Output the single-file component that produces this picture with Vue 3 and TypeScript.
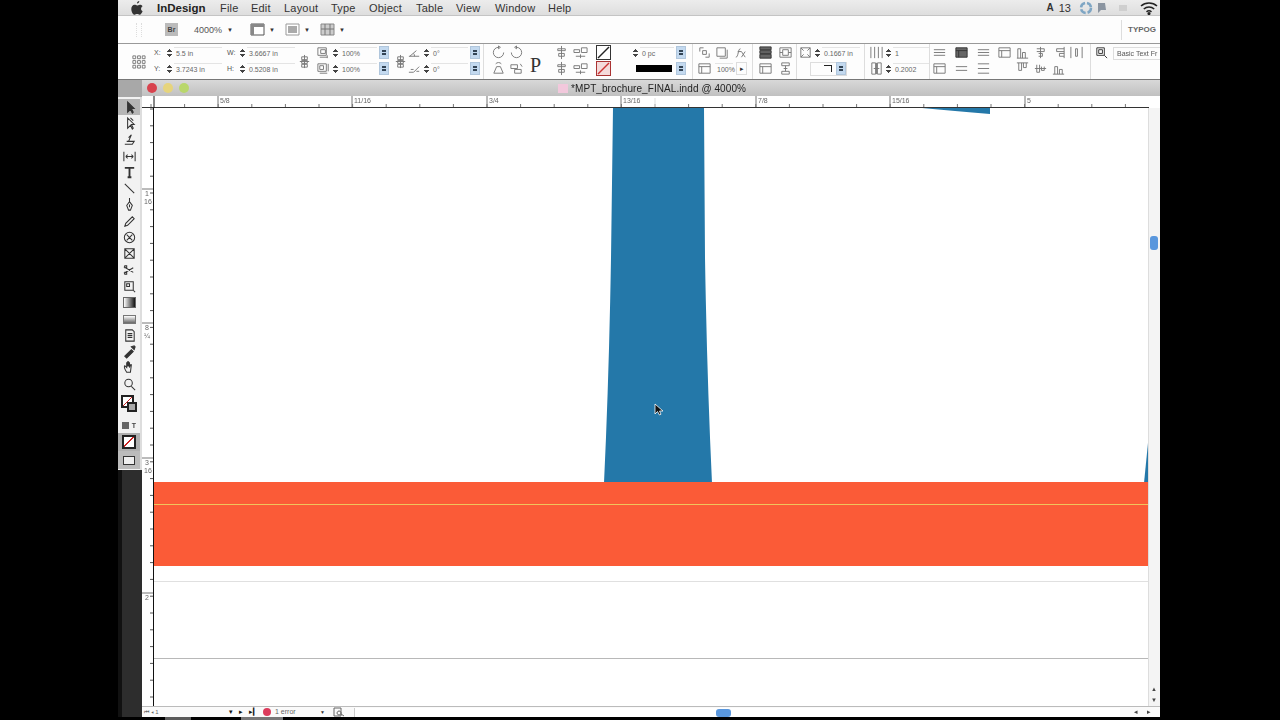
<script setup lang="ts">
type Item = {
  kind: 'icon' | 'label' | 'step' | 'val' | 'spin' | 'swatch' | 'box' | 'bigp' | 'drop' | 'corner'
  d?: string
  text?: string
  w?: number
  dark?: boolean
}
type Col = { w: number; pad?: number; gap?: number; sep?: boolean; rows: Item[][] }

const menus = [
  { name: 'File', w: 31 },
  { name: 'Edit', w: 33 },
  { name: 'Layout', w: 47 },
  { name: 'Type', w: 38 },
  { name: 'Object', w: 47 },
  { name: 'Table', w: 40 },
  { name: 'View', w: 39 },
  { name: 'Window', w: 53 },
  { name: 'Help', w: 30 },
]

const P = {
  refpt: 'M2 2h3v3H2zM7 2h3v3H7zM12 2h3v3h-3zM2 7h3v3H2zM7 7h3v3H7zM12 7h3v3h-3zM2 12h3v3H2zM7 12h3v3H7zM12 12h3v3h-3z',
  frame: 'M2 3h12v10H2zM2 6h12M5 6v7',
  page: 'M3 3h10v10H3zM5 5h6v6H5z',
  chain: 'M5 3h6v3H5zM5 7h6v3H5zM5 11h6v3H5zM8 1v14M3 8h10',
  scaleX: 'M2 3h9v8H2zM4 13h8M12 11v3M5 5h5v4H5z',
  scaleY: 'M2 3h9v8H2zM4 13h8M4 5h4v4H4zM13 3v8',
  angle: 'M2 12h11M3 12l7-6M8 12a4 4 0 0 0-1-3',
  shear: 'M2 12h5l6-6M10 11h3M4 9h3',
  rotL: 'M8 2.500a5.500 5.500 0 1 0 5.500 5.500M8 1v3l2-1.500z',
  rotR: 'M8 2.500a5.500 5.500 0 1 1-5.500 5.500M8 1v3l-2-1.500z',
  flipA: 'M3 13l3-7h4l3 7zM5 3a4 4 0 0 1 6 0',
  flipB: 'M2 4h7v4H2zM6 9h7v4H6zM12 3l2 3',
  alignA: 'M8 1v14M4 4h8v2H4zM5 9h6v3H5z',
  alignB: 'M1 5h6v3H1zM9 3h6v5H9zM8 10v4M3 12h10',
  gap: 'M4 2h8v3H4zM4 11h8v3H4zM8 5v6M6 8h4',
  shadow: 'M2 3h9v9H2zM13 5v9H5',
  fit: 'M3 3h4M3 3v4M13 13H9M13 13V9M6 6h4v4H6z',
  fx: 'M3 13c3 0 2-9 5-9M5 7h4M9 7l4 6M13 7l-4 6',
  wrapOn: 'M2 2h12v3H2zM2 6h12v3H2zM2 10h12v4H2z',
  wrapB: 'M2 3h12v10H2zM5 5h6v6H5zM2 8h3M11 8h3',
  inset: 'M3 3h10v10H3zM3 3l3 3M13 3l-3 3M3 13l3-3M13 13l-3-3',
  cols: 'M2 2v12M6 2v12M10 2v12M14 2v12',
  gut: 'M3 2h4v12H3zM9 2h4v12H9zM8 2v12M5 8h6',
  lines2: 'M2 5h12M2 8h12M2 11h12',
  double: 'M2 6h12M2 10h12',
  triple: 'M2 3h12M2 8h12M2 13h12',
  alignTop: 'M2 2h12M4 2v8h3V2M9 2v5h3V2',
  alignMid: 'M2 8h12M4 4v8h3V4M9 6v4h3V6',
  alignBot: 'M2 14h12M4 14V6h3v8M9 14V9h3v5',
  alignL: 'M2 14h12M3 14V4h3v10M8 14V8h3v6',
  alignC: 'M8 2v12M4 4h8v3H4M6 9h4v3H6',
  alignR: 'M14 2v12M14 4H6v3h8M14 9H9v3h5',
  dist: 'M2 2v12M7 4h2v8H7zM14 2v12',
  obj: 'M3 3h8v8H3zM11 11l3 3M5 5h4v4H5z',
}

const ic = (d: string): Item => ({ kind: 'icon', d })
const label = (text: string): Item => ({ kind: 'label', text })
const step: Item = { kind: 'step' }
const val = (text: string, w: number): Item => ({ kind: 'val', text, w })
const spin: Item = { kind: 'spin' }

const cols: Col[] = [
  { w: 20, rows: [[ic(P.refpt)]] },
  { w: 73, rows: [[label('X:'), step, val('5.5 in', 48)], [label('Y:'), step, val('3.7243 in', 48)]] },
  { w: 73, rows: [[label('W:'), step, val('3.6667 in', 48)], [label('H:'), step, val('0.5208 in', 48)]] },
  { w: 19, rows: [[ic(P.chain)]] },
  { w: 75, rows: [[ic(P.scaleX), step, val('100%', 37), spin], [ic(P.scaleY), step, val('100%', 37), spin]] },
  { w: 16, pad: 2, rows: [[ic(P.chain)]] },
  { w: 77, sep: true, rows: [[ic(P.angle), step, val('0°', 37), spin], [ic(P.shear), step, val('0°', 37), spin]] },
  { w: 42, pad: 7, gap: 3, rows: [[ic(P.rotL), ic(P.rotR)], [ic(P.flipA), ic(P.flipB)]] },
  { w: 22, rows: [[{ kind: 'bigp', text: 'P' }]] },
  { w: 44, pad: 6, gap: 4, rows: [[ic(P.alignA), ic(P.alignB)], [ic(P.alignA), ic(P.alignB)]] },
  { w: 36, rows: [[{ kind: 'box' }], [{ kind: 'box', dark: true }]] },
  { w: 65, pad: 5, sep: true, rows: [[step, val('0 pc', 34), spin], [{ kind: 'swatch' }, spin]] },
  { w: 60, pad: 4, gap: 3, sep: true, rows: [[ic(P.fit), ic(P.shadow), ic(P.fx)], [ic(P.frame), val('100%', 18), { kind: 'drop' }]] },
  { w: 44, pad: 5, gap: 5, sep: true, rows: [[{ kind: 'icon', d: P.wrapOn, dark: true }, ic(P.wrapB)], [ic(P.frame), ic(P.gap)]] },
  { w: 68, pad: 1, sep: true, rows: [[ic(P.inset), step, val('0.1667 in', 38)], [{ kind: 'corner' }]] },
  { w: 65, pad: 4, sep: true, rows: [[ic(P.cols), step, val('1', 36)], [ic(P.gut), step, val('0.2002', 36)]] },
  { w: 65, pad: 2, gap: 7, rows: [[ic(P.lines2), { kind: 'icon', d: P.frame, dark: true }, ic(P.lines2)], [ic(P.frame), ic(P.double), ic(P.triple)]] },
  { w: 18, pad: 2, rows: [[ic(P.frame)], []] },
  { w: 78, pad: 2, gap: 3, sep: true, rows: [[ic(P.alignL), ic(P.alignC), ic(P.alignR), ic(P.dist)], [ic(P.alignTop), ic(P.alignMid), ic(P.alignBot)]] },
]

const tools = [
  { d: 'M6 2v11l3-3 2 4 1-1-2-4h3z', on: true, fill: true },
  { d: 'M6 2v11l3-3 2 4 1-1-2-4h3zM9 2l3 3' },
  { d: 'M3 13h8l2-3H7l3-7-3 3M5 10h6' },
  { d: 'M2 3v10M14 3v10M4 8h8M4 8l2-2M4 8l2 2M12 8l-2-2M12 8l-2 2' },
  { d: 'M3 3h10M8 3v10M6 13h4', thick: true },
  { d: 'M3 3l10 10' },
  { d: 'M8 1v5M5 9l3-4 3 4-2 5H7zM8 8v3' },
  { d: 'M3 13l1-3 7-7 2 2-7 7zM3 13l3-1' },
  { d: 'M8 2.500a5.500 5.500 0 1 0 0 11 5.500 5.500 0 0 0 0-11zM5 5l6 6M11 5l-6 6' },
  { d: 'M3 3h10v10H3zM3 3l10 10M13 3L3 13' },
  { d: 'M2 4l10 6M2 11l10-6M3 3h2v2H3zM3 10h2v2H3z' },
  { d: 'M3 3h9v9H3zM5 5h3v3H5zM12 12l2 2' },
  { box: 'grad-h' },
  { box: 'grad-v' },
  { d: 'M4 2h7l2 2v10H4zM6 6h5M6 8h5M6 10h5' },
  { d: 'M3 13l7-7 2 2-7 7zM10 3l3 3 1-3-1-1z', fill: true },
  { d: 'M5 13c-2-3-3-6-2-7l2 2V3h1v4V2h1v5V3h1v5l1-3h1l-1 8z' },
  { d: 'M7 2.500a4 4 0 1 0 0 8 4 4 0 0 0 0-8zM10 10l4 4' },
]

const hMajor = [
  { x: 76, text: '5/8' },
  { x: 210, text: '11/16' },
  { x: 345, text: '3/4' },
  { x: 479, text: '13/16' },
  { x: 614, text: '7/8' },
  { x: 748, text: '15/16' },
  { x: 883, text: '5' },
]
const hTicks = Array.from({ length: 30 }, (_, i) => 9 + i * 33.6)
const vTicks = Array.from({ length: 36 }, (_, i) => 1 + i * 16.8)
const vMajor = [
  { y: 81, a: '1', b: '16' },
  { y: 215, a: '8', b: '¼' },
  { y: 350, a: '3', b: '16' },
  { y: 485, a: '2', b: '' },
]
</script>

<template>
  <div class="page">
    <div class="screen">
      <header class="menubar">
        <svg class="apple" width="12" height="14" viewBox="0 0 12 14">
          <path d="M8.300 0c.1 1.100-.9 2.500-2.300 2.500C5.900 1.300 7 .1 8.300 0zM11.600 10.200c-.7 1.600-1.700 3.500-3 3.500-.9 0-1.300-.6-2.500-.6s-1.600.6-2.500.6C2 13.700.3 10.500.3 7.900c0-2.400 1.500-4.100 3.300-4.100 1 0 1.900.7 2.500.7s1.600-.8 2.800-.8c.8 0 2 .4 2.700 1.500-2.200 1.300-1.800 4.200 0 5z" />
        </svg>
        <span class="app-name">InDesign</span>
        <span v-for="m in menus" :key="m.name" class="menu" :style="{ width: m.w + 'px' }">{{ m.name }}</span>
        <div class="tray">
          <span class="tray-a">A</span><span class="tray-num">13</span>
          <svg width="14" height="14" viewBox="0 0 14 14"><circle cx="7" cy="7" r="5" fill="none" stroke="#7fa6c4" stroke-width="2.500" stroke-dasharray="6 2" /></svg>
          <svg width="12" height="14" viewBox="0 0 12 14"><path d="M2 2h7l1 7H5l-3 3z" fill="#8b95a1" /></svg>
          <svg class="tray-grey" width="12" height="12" viewBox="0 0 12 12"><rect x="2" y="3" width="8" height="6" fill="#cfcfcf" /></svg>
          <svg class="wifi" width="18" height="14" viewBox="0 0 18 14" fill="none" stroke="#222" stroke-width="1.600">
            <path d="M1 5c4.500-4 11.500-4 16 0M3.800 8c3-2.600 7.400-2.600 10.400 0M6.500 10.800c1.500-1.200 3.500-1.200 5 0" />
            <circle cx="9" cy="12.500" r=".8" fill="#222" />
          </svg>
        </div>
      </header>

      <section class="control">
        <div class="control-top">
          <span class="grip"></span>
          <span class="br">Br</span>
          <span class="zoom-val">4000%</span><span class="caret dd-zoom">▼</span>
          <svg class="top-ic" width="15" height="13" viewBox="0 0 15 13"><path d="M1 1h13v11H1z" fill="#fff" stroke="#555" /><path d="M1 1h13v3H1zM1 4h3v8H1z" fill="#888" /></svg><span class="caret">▼</span>
          <svg class="top-ic" width="15" height="13" viewBox="0 0 15 13"><path d="M1 1h13v11H1z" fill="#fff" stroke="#999" /><path d="M3 3h9v7H3z" fill="#aaa" /></svg><span class="caret">▼</span>
          <svg class="top-ic" width="15" height="13" viewBox="0 0 15 13"><path d="M1 1h13v11H1z" fill="#ccc" stroke="#888" /><path d="M5 1v11M10 1v11M1 6h13" stroke="#777" /></svg><span class="caret">▼</span>
          <span class="typo">TYPOG</span>
        </div>
        <div class="control-bottom">
          <div
            v-for="(c, i) in cols"
            :key="i"
            class="col"
            :class="{ sep: c.sep, single: c.rows.length === 1 }"
            :style="{ width: c.w + 'px', paddingLeft: (c.pad ?? 0) + 'px' }"
          >
            <div v-for="(r, j) in c.rows" :key="j" class="cell-row" :style="{ gap: (c.gap ?? 2) + 'px' }">
              <template v-for="(it, k) in r" :key="k">
                <svg v-if="it.kind === 'icon'" class="c-icon" :class="{ dark: it.dark }" width="15" height="15" viewBox="0 0 16 16"><path :d="it.d" /></svg>
                <span v-else-if="it.kind === 'label'" class="c-label">{{ it.text }}</span>
                <span v-else-if="it.kind === 'step'" class="c-step"></span>
                <span v-else-if="it.kind === 'val'" class="c-val" :style="{ width: it.w + 'px' }">{{ it.text }}</span>
                <span v-else-if="it.kind === 'spin'" class="c-spin"></span>
                <span v-else-if="it.kind === 'swatch'" class="c-swatch"></span>
                <span v-else-if="it.kind === 'drop'" class="c-drop">▸</span>
                <span v-else-if="it.kind === 'bigp'" class="c-p">{{ it.text }}</span>
                <span v-else-if="it.kind === 'corner'" class="c-corner"><i class="corner-mark"></i><span class="c-spin"></span></span>
                <span v-else-if="it.kind === 'box'" class="c-box" :class="{ red: it.dark }">
                  <svg width="13" height="13" viewBox="0 0 13 13"><path d="M1 12L12 1" :stroke="it.dark ? '#c33' : '#222'" stroke-width="1.400" /></svg>
                </span>
              </template>
            </div>
          </div>
          <svg class="c-icon obj" width="15" height="15" viewBox="0 0 16 16"><path :d="P.obj" /></svg>
          <span class="style-field">Basic Text Fr</span>
        </div>
      </section>

      <div class="work">
        <aside class="tools">
          <div class="tool-stub"></div>
          <div class="tool-panel">
            <div v-for="(t, i) in tools" :key="i" class="tool" :class="{ on: t.on }">
              <span v-if="t.box" :class="t.box"></span>
              <svg v-else width="15" height="15" viewBox="0 0 16 16"><path :d="t.d" :class="{ solid: t.fill, thick: t.thick }" /></svg>
            </div>
            <div class="swatches">
              <span class="sw-fill"></span>
              <span class="sw-stroke"></span>
            </div>
            <div class="apply-row"><span class="mini"></span><span class="mini-t">T</span></div>
            <div class="apply"><span class="sw-none"></span></div>
            <div class="viewmode"><span class="vm"></span></div>
          </div>
          <div class="tool-dark"></div>
        </aside>

        <main class="window">
          <div class="titlebar">
            <span class="light red"></span>
            <span class="light yellow"></span>
            <span class="light green"></span>
            <span class="title"><i class="doc-ic"></i>*MPT_brochure_FINAL.indd @ 4000%</span>
          </div>

          <svg class="hruler" width="1018" height="12" viewBox="0 0 1018 12">
            <line x1="0" y1="11.500" x2="1007" y2="11.500" stroke="#333" />
            <line x1="12" y1="0" x2="12" y2="12" stroke="#111" />
            <line v-for="x in hTicks" :key="x" :x1="x" :x2="x" y1="8" y2="11" stroke="#777" />
            <g v-for="m in hMajor" :key="m.x">
              <line :x1="m.x" :x2="m.x" y1="0" y2="11" stroke="#777" />
              <text :x="m.x + 2" y="7" class="rtext">{{ m.text }}</text>
            </g>
            <line x1="513" x2="513" y1="2" y2="11" stroke="#ddd" />
          </svg>

          <div class="mid">
            <svg class="vruler" width="12" height="598" viewBox="0 0 12 598">
              <line x1="11.500" y1="0" x2="11.500" y2="598" stroke="#111" />
              <line v-for="y in vTicks" :key="y" x1="8" x2="11" :y1="y" :y2="y" stroke="#555" />
              <g v-for="m in vMajor" :key="m.y">
                <line x1="0" x2="11" :y1="m.y" :y2="m.y" stroke="#777" />
                <text x="3" :y="m.y + 7" class="rtext">{{ m.a }}</text>
                <text x="2" :y="m.y + 15" class="rtext">{{ m.b }}</text>
              </g>
            </svg>

            <div class="canvas">
              <svg class="art" width="994" height="598" viewBox="0 0 994 598">
                <path d="M459 0H550L551 150Q553 270 558 375H450Q455 270 457 150Z" fill="#2478a9" />
                <path d="M768 0H836V6Q800 3 768 0Z" fill="#2478a9" />
                <path d="M994 335V375H990Z" fill="#2478a9" />
                <rect x="0" y="374" width="994" height="84" fill="#fb5b37" />
                <rect x="0" y="396" width="994" height="1" fill="#f0c45c" />
                <rect x="994" y="374" width="2" height="84" fill="#fcd0b0" />
                <rect x="0" y="473" width="994" height="1" fill="#e0e0e0" />
                <rect x="0" y="550" width="994" height="1" fill="#b8b8b8" />
              </svg>
              <svg class="cursor" width="10" height="13" viewBox="0 0 10 13">
                <path d="M1 1v10l2.500-2.500L5.500 12l1.500-.8L5.500 8H9z" fill="#111" stroke="#fff" stroke-width=".8" />
              </svg>
            </div>

            <div class="vscroll">
              <span class="vthumb"></span>
              <span class="arrow up">▲</span>
              <span class="arrow down">▼</span>
            </div>
          </div>

          <footer class="status">
            <span class="st-page">⏮ ◂ 1</span>
            <span class="st-nav">▾ ▸ ▸▎</span>
            <span class="st-dot"></span>
            <span class="st-err">1 error</span>
            <span class="st-caret">▼</span>
            <svg class="st-ic" width="14" height="10" viewBox="0 0 14 10"><path d="M1 1h7v8H1zM6 4a2 2 0 1 0 .1 0zM8 7l3 2" fill="none" stroke="#666" /></svg>
            <div class="hscroll"><span class="hthumb"></span></div>
            <span class="arrow">◂</span>
            <span class="arrow">▸</span>
            <span class="st-end"></span>
          </footer>
        </main>
      </div>

      <div class="dock">
        <span class="dock-a"></span>
        <span class="dock-b"></span>
      </div>
    </div>
  </div>
</template>

<style>
html, body { margin: 0; background: #000; overflow: hidden; }
</style>

<style scoped>
.page {
  width: 1280px;
  height: 720px;
  background: #000;
  padding-left: 118px;
  box-sizing: border-box;
  overflow: hidden;
  font-family: "Liberation Sans", Arial, sans-serif;
}
.screen {
  width: 1042px;
  height: 720px;
  display: flex;
  flex-direction: column;
  filter: blur(0.5px);
}
.menubar {
  height: 16px;
  flex: none;
  display: flex;
  align-items: center;
  background: linear-gradient(#ececec, #dedede);
  border-bottom: 1px solid #c4c4c4;
  box-sizing: border-box;
  font-size: 11px;
  color: #333;
}
.apple { margin-left: 13px; fill: #333; }
.app-name { margin-left: 14px; width: 63px; font-weight: 700; color: #222; font-size: 11.500px; }
.menu { display: inline-block; letter-spacing: .2px; }
.tray { margin-left: auto; display: flex; align-items: center; gap: 3px; margin-right: 2px; }
.tray-a { font-size: 10px; font-weight: 700; margin-right: 2px; }
.tray-num { font-size: 11px; margin-right: 5px; }
.tray-grey { margin-left: 6px; }
.wifi { margin-left: 8px; }

.control { height: 64px; flex: none; background: #fdfdfd; border-bottom: 1px solid #777; box-sizing: border-box; }
.control-top {
  height: 28px;
  display: flex;
  align-items: center;
  border-bottom: 1px solid #999;
  box-sizing: border-box;
  color: #555;
}
.grip { width: 6px; height: 14px; margin-left: 18px; border-left: 1px dotted #ddd; border-right: 1px dotted #ddd; box-sizing: border-box; }
.br {
  margin-left: 23px;
  width: 13px;
  height: 13px;
  background: #bbb;
  font-size: 7px;
  line-height: 13px;
  text-align: center;
  color: #444;
  font-weight: 700;
}
.zoom-val { margin-left: 16px; font-size: 9px; width: 31px; }
.caret { font-size: 6px; color: #333; margin-left: 4px; width: 16px; }
.dd-zoom { margin-left: 2px; width: 23px; }
.top-ic { flex: none; }
.typo {
  margin-left: auto;
  font-size: 8px;
  font-weight: 700;
  color: #666;
  width: 32px;
  overflow: hidden;
  padding-left: 6px;
  border-left: 1px solid #ddd;
  height: 20px;
  line-height: 20px;
}
.control-bottom { height: 35px; display: flex; align-items: flex-start; padding-left: 13px; }
.col {
  flex: none;
  height: 35px;
  display: flex;
  flex-direction: column;
  gap: 1px;
  padding-top: 1px;
  box-sizing: border-box;
}
.col.single { justify-content: center; padding-top: 0; }
.col.sep { border-right: 1px solid #ddd; }
.cell-row { display: flex; align-items: center; height: 15px; flex: none; }
.c-icon { flex: none; fill: none; stroke: #777; stroke-width: 1; }
.c-icon.dark { stroke: #333; fill: #666; }
.c-label { font-size: 7px; color: #555; width: 14px; padding-left: 3px; box-sizing: border-box; }
.c-step {
  width: 5px;
  height: 10px;
  flex: none;
  background:
    linear-gradient(135deg, transparent 50%, #444 50%) 0 0/3px 4px no-repeat,
    linear-gradient(225deg, transparent 50%, #444 50%) 2px 0/3px 4px no-repeat,
    linear-gradient(45deg, transparent 50%, #444 50%) 0 6px/3px 4px no-repeat,
    linear-gradient(315deg, transparent 50%, #444 50%) 2px 6px/3px 4px no-repeat;
}
.c-val {
  font-size: 7px;
  color: #666;
  height: 12px;
  line-height: 12px;
  padding-left: 2px;
  box-sizing: border-box;
  border-top: 1px solid #e4e4e4;
  flex: none;
  white-space: nowrap;
}
.c-spin {
  width: 10px;
  height: 13px;
  flex: none;
  background: #c3d9ef;
  border: 1px solid #b0c6dc;
  box-sizing: border-box;
  position: relative;
}
.c-spin::after {
  content: "";
  position: absolute;
  left: 2px;
  top: 3px;
  width: 4px;
  height: 5px;
  border-top: 2px solid #345;
  border-bottom: 2px solid #345;
  box-sizing: border-box;
}
.c-swatch { width: 36px; height: 7px; background: #000; margin-left: 3px; margin-right: 2px; flex: none; }
.c-drop { font-size: 7px; color: #333; border: 1px solid #ddd; width: 9px; text-align: center; line-height: 11px; }
.c-p { font-family: "Liberation Serif", serif; font-size: 20px; color: #333; margin: 6px 0 0 4px; line-height: 20px; }
.c-corner {
  width: 37px;
  height: 14px;
  margin-left: 12px;
  border: 1px solid #ddd;
  box-sizing: border-box;
  display: flex;
  align-items: center;
  justify-content: flex-end;
  gap: 4px;
  flex: none;
}
.corner-mark { width: 7px; height: 6px; border-top: 1px solid #222; border-right: 1px solid #222; }
.c-box {
  width: 13px;
  height: 13px;
  border: 1px solid #333;
  margin-left: 4px;
  display: block;
  flex: none;
}
.c-box svg { display: block; }
.c-box.red { border-color: #a33; background: #f4dada; }
.obj { margin: 1px 0 0 3px; stroke: #333; }
.style-field {
  margin: 3px 0 0 4px;
  flex: 1;
  min-width: 0;
  font-size: 7px;
  color: #555;
  white-space: nowrap;
  border: 1px solid #ddd;
  border-right: 0;
  padding-left: 3px;
  height: 11px;
  line-height: 11px;
}

.work { height: 637px; flex: none; display: flex; }
.tools { width: 24px; flex: none; display: flex; flex-direction: column; background: #1e1e1e; }
.tool-stub { height: 17px; background: #a8a8a8; flex: none; }
.tool-panel {
  flex: none;
  width: 22px;
  background: #f2f2f2;
  border-right: 2px solid #ddd;
  display: flex;
  flex-direction: column;
  align-items: center;
  padding-top: 2px;
  height: 373px;
  box-sizing: content-box;
  box-sizing: border-box;
  width: 24px;
}
.tool { height: 16.300px; width: 22px; display: flex; align-items: center; justify-content: center; flex: none; }
.tool.on { background: #b5b5b5; }
.tool path { fill: none; stroke: #333; stroke-width: 1.100; }
.tool path.solid { fill: #333; }
.tool path.thick { stroke-width: 2; }
.grad-h { width: 11px; height: 9px; border: 1px solid #666; background: linear-gradient(90deg, #fff, #111); }
.grad-v { width: 11px; height: 7px; border: 1px solid #777; background: linear-gradient(#fff, #666); }
.swatches { height: 22px; width: 22px; position: relative; flex: none; margin-top: 3px; }
.sw-fill, .sw-stroke { position: absolute; border: 2px solid #222; }
.sw-fill { left: 3px; top: 0; width: 9px; height: 9px; background: linear-gradient(135deg, #fff 45%, #c22 45%, #c22 55%, #fff 55%); }
.sw-stroke { left: 9px; top: 7px; width: 6px; height: 6px; background: #aaa; }
.apply-row { height: 16px; width: 22px; display: flex; align-items: center; justify-content: center; gap: 3px; flex: none; }
.mini { width: 7px; height: 7px; background: #666; }
.mini-t { font-size: 7px; font-weight: 700; color: #444; }
.apply { height: 18px; width: 22px; background: #b0b0b0; flex: none; display: flex; align-items: center; justify-content: center; }
.sw-none { width: 10px; height: 10px; border: 2px solid #222; background: linear-gradient(135deg, #fff 45%, #c22 45%, #c22 55%, #fff 55%); }
.viewmode { height: 18px; width: 22px; background: #bbb; flex: none; display: flex; align-items: center; justify-content: center; }
.vm { width: 10px; height: 7px; border: 1px solid #333; background: #eee; }
.tool-dark { flex: 1; background: linear-gradient(90deg, #111 0 4px, #2d2d2d 4px); }

.window { flex: 1; min-width: 0; display: flex; flex-direction: column; background: #f2f2f2; }
.titlebar {
  height: 16px;
  flex: none;
  display: flex;
  align-items: center;
  background: linear-gradient(#d8d8d8, #c0c0c0);
  padding-left: 5px;
  gap: 6px;
}
.light { width: 10px; height: 10px; border-radius: 50%; flex: none; }
.red { background: #d8434e; }
.yellow { background: #e6d47c; }
.green { background: #b9d76c; }
.title {
  margin-left: 363px;
  font-size: 10px;
  color: #222;
  display: flex;
  align-items: center;
  white-space: nowrap;
  letter-spacing: .08px;
}
.doc-ic { width: 10px; height: 9px; background: #f2c8dc; margin-right: 3px; }
.hruler { display: block; flex: none; background: #fff; }
.rtext { font-size: 7px; fill: #666; font-family: "Liberation Sans", Arial, sans-serif; }
.mid { height: 598px; flex: none; display: flex; }
.vruler { display: block; flex: none; background: #fff; }
.canvas { width: 994px; height: 598px; flex: none; background: #fff; position: relative; }
.art { display: block; overflow: visible; }
.cursor { position: absolute; left: 500px; top: 295px; }
.vscroll {
  flex: 1;
  position: relative;
  background: #f4f4f4;
  border-left: 1px solid #ddd;
  box-sizing: border-box;
}
.vthumb {
  position: absolute;
  left: 1px;
  top: 128px;
  width: 8px;
  height: 14px;
  border-radius: 3px;
  background: #5a97dd;
}
.arrow { font-size: 6px; color: #444; }
.vscroll .arrow { position: absolute; left: 2px; }
.up { top: 578px; }
.down { top: 589px; }
.status {
  height: 11px;
  flex: none;
  display: flex;
  align-items: center;
  background: #fafafa;
  border-top: 1px solid #bbb;
  box-sizing: border-box;
  font-size: 7px;
  color: #666;
  line-height: 10px;
}
.st-page { width: 76px; padding-left: 2px; box-sizing: border-box; font-size: 6px; }
.st-nav { width: 32px; color: #111; font-size: 7px; white-space: nowrap; margin-left: 11px; word-spacing: 4px; }
.st-dot { width: 8px; height: 8px; border-radius: 50%; background: #dc3c5c; margin-left: 2px; }
.st-err { width: 45px; margin-left: 4px; }
.st-caret { font-size: 5px; width: 13px; color: #333; }
.st-ic { flex: none; }
.hscroll { flex: 1; margin: 0 9px 0 7px; height: 9px; position: relative; background: #fff; border-left: 1px solid #ccc; }
.hthumb { position: absolute; left: 361px; top: 1px; width: 15px; height: 8px; border-radius: 3px; background: #5a97dd; }
.status .arrow { width: 13px; text-align: center; font-size: 7px; }
.st-end { width: 5px; }
.dock { flex: 1; display: flex; background: #000; }
.dock-a { width: 26px; margin-left: 47px; background: #5a5a5a; }
.dock-b { width: 42px; margin-left: 50px; background: #777; }
</style>
